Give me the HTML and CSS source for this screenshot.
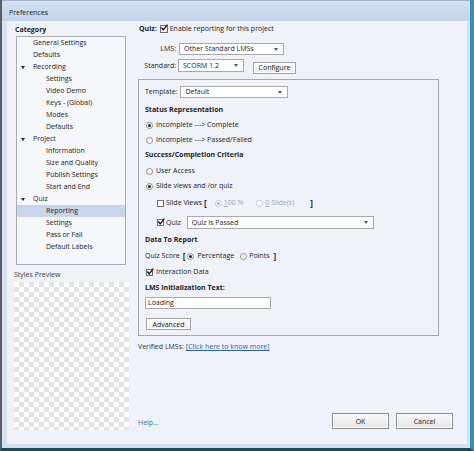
FILE: index.html
```html
<!DOCTYPE html>
<html>
<head>
<meta charset="utf-8">
<title>Preferences</title>
<link rel="stylesheet" href="styles.css">
</head>
<body>
<div class="screen">
  <div class="titlebar">Preferences</div>
  <div class="frame">
    <div class="content">
      <div class="left">
        <div class="cat-label">Category</div>
        <div class="tree">
          <div class="ti l1">General Settings</div>
          <div class="ti l1">Defaults</div>
          <div class="ti l0"><span class="tri"></span>Recording</div>
          <div class="ti l2">Settings</div>
          <div class="ti l2">Video Demo</div>
          <div class="ti l2">Keys - (Global)</div>
          <div class="ti l2">Modes</div>
          <div class="ti l2">Defaults</div>
          <div class="ti l0"><span class="tri"></span>Project</div>
          <div class="ti l2">Information</div>
          <div class="ti l2">Size and Quality</div>
          <div class="ti l2">Publish Settings</div>
          <div class="ti l2">Start and End</div>
          <div class="ti l0"><span class="tri"></span>Quiz</div>
          <div class="ti l2 sel">Reporting</div>
          <div class="ti l2">Settings</div>
          <div class="ti l2">Pass or Fail</div>
          <div class="ti l2">Default Labels</div>
        </div>
        <div class="sp-label">Styles Preview</div>
        <div class="checker"></div>
      </div>

      <div class="right">
        <div class="row r-quiz">
          <b class="quiz-lbl">Quiz:</b>
          <span class="cb cb-top"><svg viewBox="0 0 8 8"><path d="M1.3 3.6 L3.2 5.9 L7.4 0.6" /></svg></span>
          <span>Enable reporting for this project</span>
        </div>
        <div class="row r-lms">
          <span class="lbl">LMS:</span>
          <div class="select sel-lms"><span>Other Standard LMSs</span><span class="arrow"></span></div>
        </div>
        <div class="row r-std">
          <span class="lbl">Standard:</span>
          <div class="select sel-std"><span>SCORM 1.2</span><span class="arrow"></span></div>
          <div class="btn btn-cfg">Configure</div>
        </div>

        <div class="group">
          <div class="row r-tpl">
            <span>Template:</span>
            <div class="select sel-tpl"><span>Default</span><span class="arrow"></span></div>
          </div>
          <div class="row hdr g6">Status Representation</div>
          <div class="row opt g3"><span class="rb on"></span><span>Incomplete ---&gt; Complete</span></div>
          <div class="row opt g3"><span class="rb"></span><span>Incomplete ---&gt; Passed/Failed</span></div>
          <div class="row hdr g3">Success/Completion Criteria</div>
          <div class="row opt g4"><span class="rb"></span><span>User Access</span></div>
          <div class="row opt g3"><span class="rb on"></span><span>Slide views and /or quiz</span></div>
          <div class="row sub g5">
            <span class="cb"></span><span>Slide Views</span>
            <b class="brk brk-sv">[</b>
            <span class="rb dis on r-100"></span><span class="dtxt"><u>1</u>00 %</span>
            <span class="rb dis r-0"></span><span class="dtxt"><u>0</u> Slide(s)</span>
            <b class="brk brk-end">]</b>
          </div>
          <div class="row sub r-qsel">
            <span class="cb"><svg viewBox="0 0 8 8"><path d="M1.3 3.6 L3.2 5.9 L7.4 0.6" /></svg></span><span>Quiz</span>
            <div class="select sel-quiz"><span>Quiz is Passed</span><span class="arrow"></span></div>
          </div>
          <div class="row hdr g5">Data To Report</div>
          <div class="row g4 r-score">
            <span>Quiz Score</span>
            <b class="brk brk-qs">[</b>
            <span class="rb on r-pct"></span><span class="t-pct">Percentage</span>
            <span class="rb r-pts"></span><span class="t-pts">Points</span>
            <b class="brk brk-qe">]</b>
          </div>
          <div class="row g4 r-int">
            <span class="cb"><svg viewBox="0 0 8 8"><path d="M1.3 3.6 L3.2 5.9 L7.4 0.6" /></svg></span><span>Interaction Data</span>
          </div>
          <div class="row hdr g4">LMS Initialization Text:</div>
          <div class="input">Loading</div>
          <div class="btn btn-adv">Advanced</div>
        </div>

        <div class="row r-ver">
          <span>Verified LMSs:</span>
          <span class="link">[Click here to know more]</span>
        </div>

        <div class="spacer"></div>

        <div class="footer">
          <span class="help">Help...</span>
          <div class="btns">
            <div class="btn btn-dlg">OK</div>
            <div class="btn btn-dlg">Cancel</div>
          </div>
        </div>
      </div>
    </div>
  </div>
</div>
</body>
</html>
```

FILE: styles.css
```css
* { box-sizing: border-box; margin: 0; padding: 0; }
html, body { width: 474px; height: 451px; overflow: hidden; }
body {
  font-family: "Open Sans", "Liberation Sans", sans-serif;
  font-size: 7px;
  color: #222;
  background: #2d7f99;
}

.screen {
  width: 474px;
  height: 451px;
  display: flex;
  flex-direction: column;
  border-left: 2px solid #5b5e62;
  border-right: 4px solid #3a8fae;
  border-bottom: 3px solid #1c4c5a;
}

.titlebar {
  height: 21px;
  flex: none;
  background: linear-gradient(#d5e2f2, #c2d4eb);
  border-top: 1px solid #a3b3c6;
  padding: 3px 0 0 7px;
  line-height: 17px;
  color: #1b1b1b;
}

.frame {
  flex: 1;
  display: flex;
  padding: 0 3px 4px 5px;
  background: #d3e1f2;
}

.content {
  flex: 1;
  display: flex;
  background: #eff2f8;
}

/* ---------- left column ---------- */
.left {
  width: 126px;
  flex: none;
  display: flex;
  flex-direction: column;
  padding-top: 3px;
}
.cat-label { font-weight: bold; line-height: 12px; margin-left: 8px; }
.tree {
  margin-left: 9px;
  width: 110px;
  height: 229px;
  border: 1px solid #a9adb3;
  background: #f5f7fb;
}
.ti {
  height: 12px;
  line-height: 12px;
  white-space: nowrap;
  display: flex;
  align-items: center;
}
.l0 { padding-left: 4px; }
.l1 { padding-left: 16px; }
.l2 { padding-left: 29px; }
.sel { background: #c7d6ee; }
.tri {
  width: 0;
  height: 0;
  border-left: 2px solid transparent;
  border-right: 2px solid transparent;
  border-top: 3px solid #222;
  margin-right: 8px;
}
.sp-label { margin: 4px 0 0 7px; line-height: 12px; color: #444; }
.checker {
  margin: 1px 0 0 7px;
  width: 115px;
  height: 148px;
  background-color: #fff;
  background-image: repeating-conic-gradient(#e3e3e3 0 25%, #ffffff 0 50%);
  background-size: 10px 10px;
}

/* ---------- right column ---------- */
.right {
  flex: 1;
  display: flex;
  flex-direction: column;
  padding: 2px 14px 15px 5px;
}
.row {
  height: 12px;
  line-height: 12px;
  display: flex;
  align-items: center;
  white-space: nowrap;
}
.quiz-lbl { margin-left: 1px; margin-right: 3px; }

.cb {
  width: 7px;
  height: 7px;
  flex: none;
  border: 1px solid #707070;
  background: #fff;
  margin-right: 2px;
  position: relative;
}
.cb svg {
  position: absolute;
  left: -1px;
  top: -2px;
  width: 8px;
  height: 8px;
  overflow: visible;
}
.cb path { fill: none; stroke: #1c1c1c; stroke-width: 1.5; }
.cb-top { width: 8px; height: 8px; }

.lbl { width: 38px; text-align: right; flex: none; }
.r-lms { margin-top: 8px; }
.r-std { margin-top: 4px; height: 13px; }

.select {
  height: 12px;
  border: 1px solid #a9a9a9;
  background: #fff;
  display: flex;
  align-items: center;
  justify-content: space-between;
  padding: 0 5px 0 4px;
  flex: none;
}
.arrow {
  width: 0;
  height: 0;
  border-left: 2px solid transparent;
  border-right: 2px solid transparent;
  border-top: 3px solid #555;
}
.sel-lms { margin-left: 3px; width: 105px; }
.sel-std { margin-left: 2px; width: 66px; height: 13px; }

.btn {
  display: flex;
  align-items: center;
  justify-content: center;
  border: 1px solid #a2a2a2;
  background: linear-gradient(#fdfdfd, #ececec);
  box-shadow: inset 0 0 0 1px #fff;
  flex: none;
}
.btn-cfg { margin-left: 9px; width: 43px; height: 12px; margin-top: 4px; }

.group {
  margin-top: 7px;
  width: 301px;
  border: 1px solid #a7a7a7;
  padding: 0 0 5px 6px;
}
.r-tpl { margin-top: 6px; }
.sel-tpl { margin-left: 3px; width: 108px; }
.hdr { font-weight: bold; }
.g3 { margin-top: 3px; }
.g4 { margin-top: 4px; }
.g5 { margin-top: 5px; }
.g6 { margin-top: 6px; }

.rb {
  width: 7px;
  height: 7px;
  flex: none;
  border-radius: 50%;
  border: 1px solid #8a8a8a;
  background: #fff;
  display: flex;
  align-items: center;
  justify-content: center;
}
.rb.on::after {
  content: "";
  width: 3px;
  height: 3px;
  border-radius: 50%;
  background: #222;
}
.rb.dis { border-color: #c4c4c4; }
.rb.dis.on::after { background: #b4b4b4; }
.opt .rb { margin-left: 1px; margin-right: 3px; }

.sub { padding-left: 12px; }
.dtxt { color: #a8a8a8; }
.brk { font-weight: bold; font-size: 8px; }
.brk-sv { margin-left: 2px; }
.r-100 { margin-left: 8px; margin-right: 2px; }
.r-0 { margin-left: 13px; margin-right: 2px; }
.brk-end { margin-left: 16px; }

.r-qsel { margin-top: 7px; height: 13px; }
.sel-quiz { margin-left: 6px; width: 187px; height: 13px; }

.brk-qs { margin-left: 3px; }
.r-pct { margin-left: 2px; margin-right: 3px; }
.r-pts { margin-left: 6px; margin-right: 2px; }
.brk-qe { margin-left: 4px; }

.r-int .cb { margin-left: 1px; margin-right: 3px; }

.input {
  margin-top: 3px;
  width: 126px;
  height: 12px;
  line-height: 10px;
  border: 1px solid #a9a9a9;
  background: #fff;
  padding-left: 2px;
}
.btn-adv { margin-top: 9px; margin-left: 1px; width: 45px; height: 12px; }

.r-ver { margin-top: 5px; color: #333; }
.link { margin-left: 2px; color: #2d5fae; text-decoration: underline; }

.spacer { flex: 1; }
.footer {
  display: flex;
  align-items: flex-end;
  justify-content: space-between;
}
.help { line-height: 12px; color: #4a6c9b; }
.btns { display: flex; gap: 7px; }
.btn-dlg {
  width: 57px;
  height: 16px;
  border-color: #8e8e8e;
  background: linear-gradient(#f7f7f7, #e6e6e6);
}
```
